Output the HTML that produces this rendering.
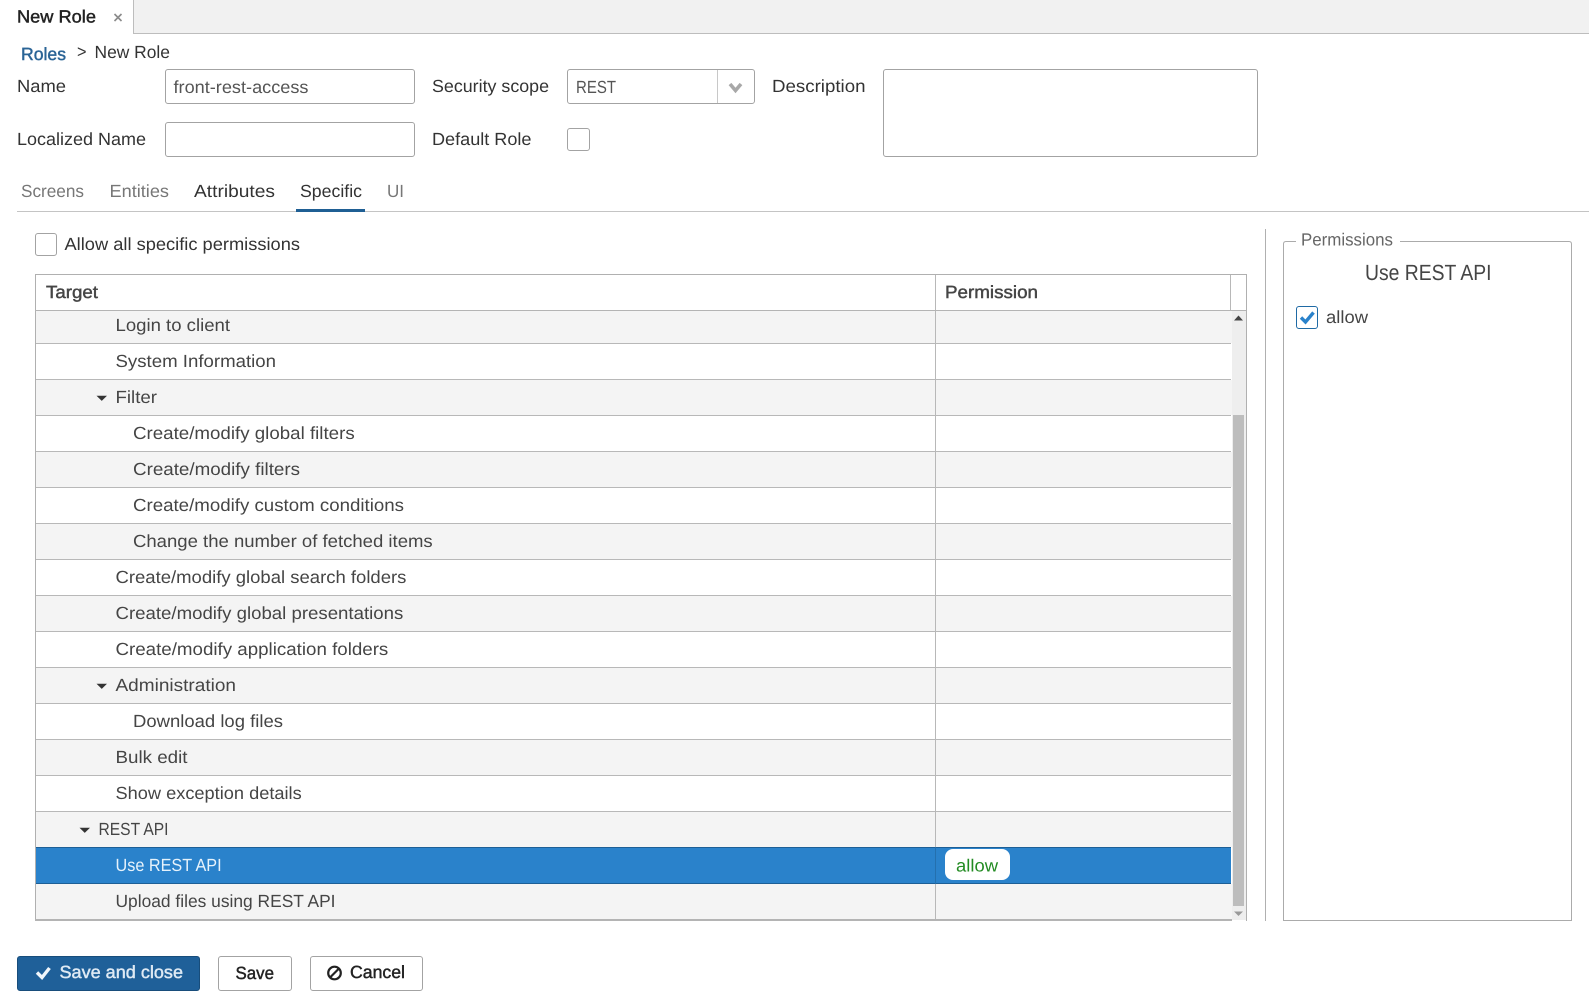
<!DOCTYPE html>
<html lang="en">
<head>
<meta charset="utf-8">
<title>New Role</title>
<style>
html,body{margin:0;padding:0;background:#fff;width:1589px;height:1007px;overflow:hidden}
svg{display:block}
text{font-family:"Liberation Sans",sans-serif;font-size:17.6px;fill:#454545;text-rendering:geometricPrecision}
.semi{stroke-width:.45;paint-order:stroke}
.bx{fill:#fff;stroke:#a3a3a3;stroke-width:1}
</style>
</head>
<body>
<svg width="1589" height="1007" viewBox="0 0 1589 1007" xmlns="http://www.w3.org/2000/svg">
<!-- tab bar -->
<rect x="133" y="0" width="1456" height="33" fill="#f1f1f1"/>
<path d="M133.5 0V33.5H1589" fill="none" stroke="#bdbdbd"/>
<text class="semi" x="17" y="22.500" textLength="79" lengthAdjust="spacingAndGlyphs" style="fill:#222;stroke:#222">New Role</text>
<path d="M114.5 14L121.5 21M121.5 14L114.5 21" stroke="#8a8a8a" stroke-width="1.6" fill="none"/>
<!-- breadcrumb -->
<text class="semi" x="21" y="60" textLength="45" lengthAdjust="spacingAndGlyphs" style="fill:#2a6496;stroke:#2a6496">Roles</text>
<text x="77" y="57.500" textLength="9.5" lengthAdjust="spacingAndGlyphs" style="fill:#333">&gt;</text>
<text x="94.5" y="58" textLength="75.5" lengthAdjust="spacingAndGlyphs" style="fill:#333">New Role</text>
<!-- form -->
<text x="17" y="92" textLength="49" lengthAdjust="spacingAndGlyphs" style="fill:#333">Name</text>
<rect class="bx" x="165.5" y="69.5" width="249" height="34" rx="2.5"/>
<text x="173.5" y="93" textLength="135" lengthAdjust="spacingAndGlyphs" style="fill:#555">front-rest-access</text>
<text x="17" y="145" textLength="129" lengthAdjust="spacingAndGlyphs" style="fill:#333">Localized Name</text>
<rect class="bx" x="165.5" y="122.5" width="249" height="34" rx="2.5"/>
<text x="432" y="92" textLength="117" lengthAdjust="spacingAndGlyphs" style="fill:#333">Security scope</text>
<rect class="bx" x="567.5" y="69.5" width="187" height="34" rx="2.5"/>
<path d="M717.5 70V103" stroke="#c8c8c8"/>
<text x="576" y="93" textLength="40" lengthAdjust="spacingAndGlyphs" style="fill:#555">REST</text>
<path d="M730 84L735.500 90.500L741 84" fill="none" stroke="#a8a8a8" stroke-width="3.6"/>
<text x="432" y="145" textLength="99.500" lengthAdjust="spacingAndGlyphs" style="fill:#333">Default Role</text>
<rect class="bx" x="567.5" y="128.5" width="22" height="22" rx="2.5"/>
<text x="772" y="92" textLength="93.500" lengthAdjust="spacingAndGlyphs" style="fill:#333">Description</text>
<rect class="bx" x="883.5" y="69.5" width="374" height="87" rx="2.5"/>
<!-- tabs -->
<text x="21" y="197" textLength="63" lengthAdjust="spacingAndGlyphs" style="fill:#777">Screens</text>
<text x="109.500" y="197" textLength="59.500" lengthAdjust="spacingAndGlyphs" style="fill:#777">Entities</text>
<text x="194" y="197" textLength="81" lengthAdjust="spacingAndGlyphs" style="fill:#333">Attributes</text>
<text x="300" y="197" textLength="62" lengthAdjust="spacingAndGlyphs" style="fill:#333">Specific</text>
<text x="387" y="197" textLength="17" lengthAdjust="spacingAndGlyphs" style="fill:#777">UI</text>
<path d="M17 211.500H1589" stroke="#c4c4c4"/>
<rect x="296" y="209" width="69" height="3" fill="#1f5f94"/>
<!-- allow all -->
<rect class="bx" x="35.500" y="233.500" width="21" height="22" rx="2.500"/>
<text x="64.500" y="250" textLength="235.500" lengthAdjust="spacingAndGlyphs" style="fill:#333">Allow all specific permissions</text>
<!-- table rows -->
<g fill="#f4f4f4">
<rect x="36" y="311" width="1196" height="32"/>
<rect x="36" y="380" width="1196" height="35"/>
<rect x="36" y="452" width="1196" height="35"/>
<rect x="36" y="524" width="1196" height="35"/>
<rect x="36" y="596" width="1196" height="35"/>
<rect x="36" y="668" width="1196" height="35"/>
<rect x="36" y="740" width="1196" height="35"/>
<rect x="36" y="812" width="1196" height="35"/>
<rect x="36" y="884" width="1196" height="36"/>
</g>
<g stroke="#b8b8b8" fill="none">
<path d="M36 343.500H1231M36 379.500H1231M36 415.500H1231M36 451.500H1231M36 487.500H1231M36 523.500H1231M36 559.500H1231M36 595.500H1231M36 631.500H1231M36 667.500H1231M36 703.500H1231M36 739.500H1231M36 775.500H1231M36 811.500H1231"/>
<path d="M935.500 274V920"/>
<path d="M1230.500 274V310"/>
</g>
<rect x="36" y="847" width="1195" height="37" fill="#2a82cb"/>
<path d="M36 847.500H1231M36 883.500H1231" stroke="#1d5f96"/>
<path d="M935.500 847V884" stroke="#2470ae"/>
<!-- scrollbar -->
<rect x="1232" y="311" width="14" height="609" fill="#eeeeee"/>
<rect x="1233" y="415" width="11" height="491" fill="#bdbdbd"/>
<path d="M1238.500 315.500L1243 320.500H1234Z" fill="#444"/>
<path d="M1234 911.500H1243L1238.500 916Z" fill="#999"/>
<!-- table frame -->
<path d="M35.500 920V274.500H1246.500V921" fill="none" stroke="#b0b0b0"/>
<path d="M35 310.500H1246" stroke="#b4b4b4"/>
<path d="M35 920H1232" stroke="#b4b4b4" stroke-width="2"/>
<!-- table head -->
<text class="semi" x="46" y="298" textLength="52" lengthAdjust="spacingAndGlyphs" style="stroke:#454545">Target</text>
<text class="semi" x="945" y="298" textLength="93" lengthAdjust="spacingAndGlyphs" style="stroke:#454545">Permission</text>
<!-- table text -->
<text x="115.500" y="331" textLength="114.500" lengthAdjust="spacingAndGlyphs">Login to client</text>
<text x="115.500" y="367" textLength="160.500" lengthAdjust="spacingAndGlyphs">System Information</text>
<path d="M96.500 395.700H107L101.750 400.900Z" fill="#333"/>
<text x="115.500" y="403" textLength="41.500" lengthAdjust="spacingAndGlyphs">Filter</text>
<text x="133" y="439" textLength="221.700" lengthAdjust="spacingAndGlyphs">Create/modify global filters</text>
<text x="133" y="475" textLength="167" lengthAdjust="spacingAndGlyphs">Create/modify filters</text>
<text x="133" y="511" textLength="271" lengthAdjust="spacingAndGlyphs">Create/modify custom conditions</text>
<text x="133" y="547" textLength="299.700" lengthAdjust="spacingAndGlyphs">Change the number of fetched items</text>
<text x="115.500" y="583" textLength="290.900" lengthAdjust="spacingAndGlyphs">Create/modify global search folders</text>
<text x="115.500" y="619" textLength="287.800" lengthAdjust="spacingAndGlyphs">Create/modify global presentations</text>
<text x="115.500" y="655" textLength="272.800" lengthAdjust="spacingAndGlyphs">Create/modify application folders</text>
<path d="M96.500 683.700H107L101.750 688.900Z" fill="#333"/>
<text x="115.500" y="691" textLength="120.500" lengthAdjust="spacingAndGlyphs">Administration</text>
<text x="133" y="727" textLength="150" lengthAdjust="spacingAndGlyphs">Download log files</text>
<text x="115.500" y="763" textLength="72" lengthAdjust="spacingAndGlyphs">Bulk edit</text>
<text x="115.500" y="799" textLength="186.200" lengthAdjust="spacingAndGlyphs">Show exception details</text>
<path d="M79.500 827.700H90L84.750 832.900Z" fill="#333"/>
<text x="98.500" y="835" textLength="70" lengthAdjust="spacingAndGlyphs">REST API</text>
<text x="115.500" y="871" textLength="106.100" lengthAdjust="spacingAndGlyphs" style="fill:#e6f2fb">Use REST API</text>
<text x="115.500" y="907" textLength="220" lengthAdjust="spacingAndGlyphs">Upload files using REST API</text>
<rect x="945" y="849" width="65" height="31" rx="8" fill="#fff"/>
<text x="956" y="871.500" textLength="42" lengthAdjust="spacingAndGlyphs" style="fill:#228b22">allow</text>
<!-- right panel -->
<path d="M1265.500 229V921" stroke="#b0b0b0"/>
<path d="M1296 241.500H1286Q1283.500 241.500 1283.500 244V920.500H1571.500V244Q1571.500 241.500 1569 241.500H1400" fill="none" stroke="#ababab"/>
<text x="1301" y="245.500" textLength="92" lengthAdjust="spacingAndGlyphs" style="fill:#666">Permissions</text>
<text x="1365" y="280" textLength="126.500" lengthAdjust="spacingAndGlyphs" style="font-size:22px;fill:#454545">Use REST API</text>
<rect x="1296.500" y="306.500" width="21" height="22" rx="2.500" fill="#fff" stroke="#1f6aa5"/>
<path d="M1301 317.500L1305.500 322L1313.500 312.500" fill="none" stroke="#2a82cb" stroke-width="3.400"/>
<text x="1326" y="323" textLength="42" lengthAdjust="spacingAndGlyphs" style="fill:#454545">allow</text>
<!-- buttons -->
<rect x="17.500" y="956.500" width="182" height="34" rx="2.500" fill="#1f6099" stroke="#184d7b"/>
<path d="M37 972.500L42 977.500L49.500 968" fill="none" stroke="#f0f6fb" stroke-width="3.400"/>
<text class="semi" x="59.500" y="978" textLength="123.500" lengthAdjust="spacingAndGlyphs" style="fill:#dfeaf4;stroke:#dfeaf4">Save and close</text>
<rect class="bx" x="218.500" y="956.500" width="73" height="34" rx="2.500"/>
<text class="semi" x="235.500" y="979" textLength="38.500" lengthAdjust="spacingAndGlyphs" style="fill:#222;stroke:#222">Save</text>
<rect class="bx" x="310.500" y="956.500" width="112" height="34" rx="2.500"/>
<circle cx="334.500" cy="973" r="6.300" fill="none" stroke="#222" stroke-width="2.200"/>
<path d="M330 977.500L339 968.500" stroke="#222" stroke-width="2.200"/>
<text class="semi" x="350" y="978" textLength="55" lengthAdjust="spacingAndGlyphs" style="fill:#222;stroke:#222">Cancel</text>
</svg>
</body>
</html>
